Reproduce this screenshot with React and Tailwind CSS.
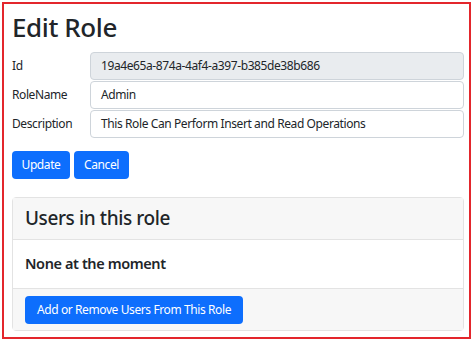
export default function App() {
  return (
    <div
      className="w-[474px] h-[341px] bg-white pt-[2px] pl-[2px] pr-[3px] pb-[2px] text-[#212529]"
      style={{ fontFamily: '"Noto Sans", "Open Sans", sans-serif' }}
    >
      <div className="h-full border-2 border-[#e3262c] pl-[8px] pr-[5px] pt-[6px] tracking-[-0.025em]">
        <h1 className="text-[26px] leading-[34px] font-medium mb-[8px]">Edit Role</h1>

        <div className="flex flex-col gap-[1px] text-[12px]">
          <div className="flex items-center">
            <label className="w-[78px]">Id</label>
            <div className="flex-1 h-[28px] flex items-center px-[10px] rounded-[4px] border border-[#ced4da] bg-[#e9ecef]">
              19a4e65a-874a-4af4-a397-b385de38b686
            </div>
          </div>
          <div className="flex items-center">
            <label className="w-[78px]">RoleName</label>
            <div className="flex-1 h-[28px] flex items-center px-[10px] rounded-[4px] border border-[#ced4da] bg-white">
              Admin
            </div>
          </div>
          <div className="flex items-center">
            <label className="w-[78px]">Description</label>
            <div className="flex-1 h-[28px] flex items-center px-[10px] rounded-[4px] border border-[#ced4da] bg-white">
              This Role Can Perform Insert and Read Operations
            </div>
          </div>
        </div>

        <div className="flex gap-[4px] mt-[13px] text-[12px]">
          <button className="h-[28px] w-[58px] rounded-[4px] bg-[#0d6efd] text-white">Update</button>
          <button className="h-[28px] w-[55px] rounded-[4px] bg-[#0d6efd] text-white">Cancel</button>
        </div>

        <div className="mt-[18px] rounded-[4px] border border-[#e3e3e3]">
          <div className="h-[42px] flex items-center px-[12px] bg-[#f7f7f7] border-b border-[#e3e3e3]">
            <h3 className="text-[19px] font-medium">Users in this role</h3>
          </div>
          <div className="h-[49px] flex items-center px-[12px] border-b border-[#e3e3e3]">
            <h5 className="text-[14.5px] font-semibold">None at the moment</h5>
          </div>
          <div className="h-[41px] flex items-center px-[12px] bg-[#f7f7f7]">
            <button className="h-[28px] w-[218px] rounded-[4px] bg-[#0d6efd] text-white text-[12px]">
              Add or Remove Users From This Role
            </button>
          </div>
        </div>
      </div>
    </div>
  );
}
